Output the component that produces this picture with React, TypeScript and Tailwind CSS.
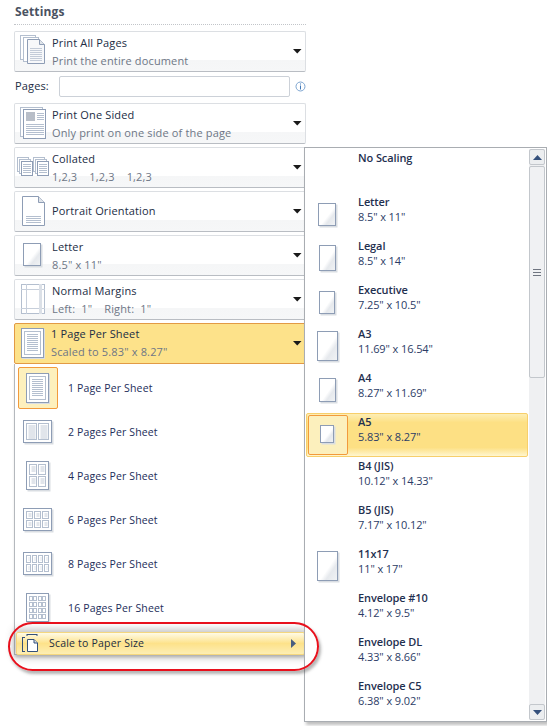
import React from "react";

const B = "#8e9db5";
const L = "#b4bfcf";

function Caret() {
  return (
    <svg width="9" height="5" viewBox="0 0 9 5" className="shrink-0">
      <path d="M0 0H8.5L4.25 4.5Z" fill="#1a1a1a" />
    </svg>
  );
}

function Lines({ x, y, w, n, gap = 2, color = L }: { x: number; y: number; w: number; n: number; gap?: number; color?: string }) {
  return (
    <>
      {Array.from({ length: n }).map((_, i) => (
        <rect key={i} x={x} y={y + i * gap} width={w} height={1} fill={color} />
      ))}
    </>
  );
}

function IconAllPages() {
  return (
    <svg width="36" height="39" viewBox="0 0 36 39" className="shrink-0">
      <rect x="5.5" y="3.5" width="15" height="24" fill="#fff" stroke={L} />
      <rect x="8.5" y="5.5" width="15" height="24" fill="#fff" stroke={L} />
      <path d="M12.5 7.5H24.5L29.5 12.5V31.5H12.5Z" fill="#f7f8fa" stroke={B} />
      <path d="M24.5 7.5V12.5H29.5" fill="#dfe4ea" stroke={B} />
      <Lines x={15} y={16} w={12} n={7} color="#c3cbd8" />
    </svg>
  );
}
function IconOneSided() {
  return (
    <svg width="36" height="39" viewBox="0 0 36 39" className="shrink-0">
      <rect x="5.5" y="3.5" width="22" height="29" fill="#fff" stroke={L} />
      <rect x="8.5" y="5.5" width="22" height="29" fill="#fff" stroke={B} />
      <rect x="11" y="8" width="9" height="9" fill="#b8bec8" />
      <Lines x={22} y={9} w={7} n={4} />
      <Lines x={11} y={20} w={18} n={6} />
    </svg>
  );
}
function Mini({ x }: { x: number }) {
  return (
    <>
      <rect x={x + 0.5} y="9.5" width="11" height="14" fill="#fff" stroke={L} />
      <rect x={x + 2.5} y="11.5" width="11" height="14" fill="#fff" stroke={L} />
      <rect x={x + 4.5} y="13.5" width="11" height="14" fill="#fff" stroke={B} />
      <Lines x={x + 6} y={16} w={8} n={5} gap={2} />
    </>
  );
}
function IconCollated() {
  return (
    <svg width="36" height="39" viewBox="0 0 36 39" className="shrink-0 -ml-px">
      <Mini x={2} />
      <Mini x={18} />
    </svg>
  );
}
function IconPortrait() {
  return (
    <svg width="36" height="39" viewBox="0 0 36 39" className="shrink-0">
      <path d="M7.5 4.5H23.5L29.5 10.5V33.5H7.5Z" fill="#fff" stroke={B} />
      <path d="M23.5 4.5V10.5H29.5" fill="#dfe4ea" stroke={B} />
      <Lines x={11} y={24} w={15} n={4} />
    </svg>
  );
}
function IconPage({ id, w, h }: { id: string; w: number; h: number }) {
  return (
    <svg width={w + 2} height={h + 2} viewBox={`0 0 ${w + 2} ${h + 2}`} className="shrink-0">
      <defs>
        <linearGradient id={id} x1="0" y1="0" x2="1" y2="1">
          <stop offset="0.55" stopColor="#ffffff" />
          <stop offset="0.7" stopColor="#e6e9ed" />
          <stop offset="1" stopColor="#f1f3f5" />
        </linearGradient>
      </defs>
      <rect x="1.5" y="1.5" width={w} height={h} fill="#d9dde2" />
      <rect x="0.5" y="0.5" width={w - 1} height={h - 1} fill={`url(#${id})`} stroke={B} />
    </svg>
  );
}
function IconMargins() {
  return (
    <svg width="36" height="39" viewBox="0 0 36 39" className="shrink-0">
      <rect x="6.5" y="4.5" width="23" height="29" fill="#fff" stroke={L} />
      <rect x="6" y="9" width="24" height="1" fill="#c7cfdb" />
      <rect x="6" y="28" width="24" height="1" fill="#c7cfdb" />
      <rect x="11" y="4" width="1" height="30" fill="#c7cfdb" />
      <rect x="24" y="4" width="3" height="30" fill="#dbe0e7" />
    </svg>
  );
}
function IconOnePage({ size = 36 }: { size?: number }) {
  return (
    <svg width={size} height="39" viewBox="0 0 36 39" className="shrink-0">
      <rect x="7" y="5" width="23" height="30" fill="#d9dde2" />
      <rect x="6.5" y="4.5" width="22" height="29" fill="#fff" stroke={B} />
      <rect x="9.5" y="7.5" width="16" height="23" fill="#fff" stroke={L} />
      <Lines x={12} y={10} w={11} n={9} gap={2} />
    </svg>
  );
}
function IconGrid({ w, h, cols, rows, lines }: { w: number; h: number; cols: number; rows: number; lines: number }) {
  const pad = 2.5;
  const cw = (w - 1 - pad * 2 - (cols - 1)) / cols;
  const ch = (h - 1 - pad * 2 - (rows - 1)) / rows;
  const cells = [];
  for (let r = 0; r < rows; r++) {
    for (let c = 0; c < cols; c++) {
      const x = Math.round(pad + c * (cw + 1)) + 0.5;
      const y = Math.round(pad + r * (ch + 1)) + 0.5;
      const rw = Math.round(cw) - 1;
      const rh = Math.round(ch) - 1;
      const step = lines > 0 ? Math.max(2, Math.floor((rh - 2) / lines)) : 2;
      cells.push(
        <g key={`${r}-${c}`}>
          <rect x={x} y={y} width={rw} height={rh} fill="#fff" stroke={L} />
          {Array.from({ length: lines }).map((_, i) => (
            <rect key={i} x={x + 2} y={y + 2 + i * step} width={Math.max(rw - 3, 1)} height="1" fill="#c3cbd8" />
          ))}
        </g>
      );
    }
  }
  return (
    <svg width={w + 2} height={h + 2} viewBox={`0 0 ${w + 2} ${h + 2}`} className="shrink-0">
      <rect x="1.5" y="1.5" width={w} height={h} fill="#d9dde2" />
      <rect x="0.5" y="0.5" width={w - 1} height={h - 1} fill="#fff" stroke={B} />
      {cells}
    </svg>
  );
}
function IconScale() {
  return (
    <svg width="16" height="19" viewBox="0 0 16 19" className="shrink-0">
      <path d="M0.5 3V18M0 3.5H3M0 17.5H3" stroke="#33507a" fill="none" />
      <path d="M5 0.5H15M5 0V2M15 0V2" stroke="#33507a" fill="none" />
      <path d="M5.5 5.5H12L15.5 9V17.5H5.5Z" fill="#fff" stroke="#33507a" />
      <path d="M12 5.5V9H15.5" fill="#d8dde4" stroke="#33507a" />
    </svg>
  );
}

function Dropdown({
  icon,
  title,
  sub,
  active,
}: {
  icon: React.ReactNode;
  title: string;
  sub?: React.ReactNode;
  active?: boolean;
}) {
  const box = active
    ? "border-[#e29a45] bg-[#fde28a] rounded-[2px]"
    : "border-[#dcdfe3] border-b-[#b9bdc3] rounded-[2px] bg-[linear-gradient(#ffffff_0,#ffffff_72%,#f5f6f7_72%,#f6f7f8_100%)]";
  return (
    <div className={`flex h-[41px] items-center border pr-[3px] ${box}`}>
      <div className="flex w-[36px] shrink-0 justify-center">{icon}</div>
      <div
        className={`flex min-w-0 flex-1 flex-col ${active ? "-mt-[2px] gap-[3px]" : sub ? "ml-px gap-[3px]" : "-mt-[2px] ml-px"}`}
      >
        <div className="h-[15px] whitespace-nowrap leading-[15px] text-[#222d44]">{title}</div>
        {sub && <div className="h-[15px] whitespace-pre leading-[15px] text-[#6e7686]">{sub}</div>}
      </div>
      <Caret />
    </div>
  );
}

const menu: { label: string; icon: React.ReactNode }[] = [
  { label: "1 Page Per Sheet", icon: <IconOnePage /> },
  { label: "2 Pages Per Sheet", icon: <IconGrid w={29} h={23} cols={2} rows={1} lines={7} /> },
  { label: "4 Pages Per Sheet", icon: <IconGrid w={23} h={29} cols={2} rows={2} lines={3} /> },
  { label: "6 Pages Per Sheet", icon: <IconGrid w={29} h={23} cols={3} rows={2} lines={2} /> },
  { label: "8 Pages Per Sheet", icon: <IconGrid w={29} h={23} cols={4} rows={2} lines={2} /> },
  { label: "16 Pages Per Sheet", icon: <IconGrid w={23} h={29} cols={4} rows={4} lines={0} /> },
];

const sizes: { name: string; dim: string; icon?: [number, number]; active?: boolean }[] = [
  { name: "No Scaling", dim: "" },
  { name: "Letter", dim: '8.5" x 11"', icon: [18, 23] },
  { name: "Legal", dim: '8.5" x 14"', icon: [17, 26] },
  { name: "Executive", dim: '7.25" x 10.5"', icon: [16, 23] },
  { name: "A3", dim: '11.69" x 16.54"', icon: [21, 30] },
  { name: "A4", dim: '8.27" x 11.69"', icon: [17, 24] },
  { name: "A5", dim: '5.83" x 8.27"', icon: [14, 18], active: true },
  { name: "B4 (JIS)", dim: '10.12" x 14.33"' },
  { name: "B5 (JIS)", dim: '7.17" x 10.12"' },
  { name: "11x17", dim: '11" x 17"', icon: [21, 30] },
  { name: "Envelope #10", dim: '4.12" x 9.5"' },
  { name: "Envelope DL", dim: '4.33" x 8.66"' },
  { name: "Envelope C5", dim: '6.38" x 9.02"' },
];

function ScrollBtn({ up }: { up?: boolean }) {
  return (
    <div className="flex h-[16px] items-center justify-center rounded-[2px] border border-[#c3c7cc] bg-[#eceef0]">
      <svg width="9" height="5" viewBox="0 0 9 5">
        <path d={up ? "M0 5H9L4.5 0Z" : "M0 0H9L4.5 5Z"} fill="#34507c" />
      </svg>
    </div>
  );
}

export default function App() {
  return (
    <div className="relative h-[726px] w-[547px] overflow-hidden bg-white font-['Open_Sans',sans-serif] text-[11px] tracking-[0.15px]">
      <div className="w-[306px] pl-[14px]">
        <div className="h-[25px] border-b border-dotted border-[#c2c5c9] pt-[4px] pl-[1px] text-[12px] font-bold leading-[16px] text-[#4a5262]">
          Settings
        </div>
        <div className="mt-[6px] flex flex-col gap-[3px]">
          <Dropdown icon={<IconAllPages />} title="Print All Pages" sub="Print the entire document" />
          <div className="mb-[3px] mt-[1px] flex h-[21px] items-center">
            <div className="w-[45px] pl-[1px] text-[#222d44]">Pages:</div>
            <div className="h-[21px] w-[232px] rounded-[2px] border border-[#ccd1d8] bg-white" />
            <svg width="11" height="11" viewBox="0 0 11 11" className="ml-[5px]">
              <circle cx="5.5" cy="5.5" r="4.5" fill="#fff" stroke="#7ba4d0" />
              <rect x="5" y="2.5" width="1" height="1" fill="#3f78b8" />
              <rect x="5" y="4.5" width="1" height="4" fill="#3f78b8" />
            </svg>
          </div>
          <Dropdown icon={<IconOneSided />} title="Print One Sided" sub="Only print on one side of the page" />
          <Dropdown
            icon={<IconCollated />}
            title="Collated"
            sub={
              <span className="flex gap-[12px]">
                <span>1,2,3</span>
                <span>1,2,3</span>
                <span>1,2,3</span>
              </span>
            }
          />
          <Dropdown icon={<IconPortrait />} title="Portrait Orientation" />
          <Dropdown icon={<IconPage id="letterBtn" w={18} h={23} />} title="Letter" sub={'8.5" x 11"'} />
          <Dropdown icon={<IconMargins />} title="Normal Margins" sub={'Left:  1"    Right:  1"'} />
          <Dropdown active icon={<IconOnePage />} title="1 Page Per Sheet" sub={'Scaled to 5.83" x 8.27"'} />
        </div>

        <div className="h-[291px] border-x border-b border-[#b4b8bd] bg-white pt-[2px] shadow-[1px_2px_3px_rgba(0,0,0,0.2)]">
          {menu.map((m, i) => (
            <div key={m.label} className="ml-[3px] flex h-[44px] items-center">
              <div
                className={`flex h-[42px] w-[40px] shrink-0 items-center justify-center rounded-[2px] border ${
                  i === 0 ? "border-[#f29a3c] bg-[#fdf0bd]" : "border-transparent"
                }`}
              >
                {m.icon}
              </div>
              <div className="ml-[10px] mt-px text-[10.5px] tracking-[0.15px] text-[#222d5a]">{m.label}</div>
            </div>
          ))}
          <div className="relative z-10 mt-[2px] ml-px flex h-[23px] w-[289px] items-center rounded-[2px] border border-[#f5d77e] bg-[linear-gradient(#fffbe6,#fde28a_50%,#fdeeb4)] shadow-[0_0_7px_3px_rgba(90,90,90,0.35)]">
            <div className="ml-[5px] w-[27px]">
              <IconScale />
            </div>
            <div className="flex-1 text-[10.5px] tracking-[0.2px] text-[#222d44]">Scale to Paper Size</div>
            <svg width="5" height="9" viewBox="0 0 5 9" className="mr-[8px]">
              <path d="M0 0V9L5 4.5Z" fill="#475d80" />
            </svg>
          </div>
        </div>
      </div>

      {/* submenu flyout */}
      <div className="absolute left-[304px] top-[147px] z-20 flex h-[575px] w-[243px] border border-[#a9adb2] bg-white shadow-[2px_3px_3px_rgba(0,0,0,0.25)]">
        <div className="w-[224px] pt-px pl-[1px]">
          {sizes.map((s) => (
            <div
              key={s.name}
              className={`flex h-[44px] w-[222px] items-center rounded-[2px] border pl-[1px] ${
                s.active
                  ? "border-[#f7cf6b] bg-[linear-gradient(#fdeeb5,#fde084_20%,#fde084_80%,#fff6cf)]"
                  : "border-transparent"
              }`}
            >
              <div
                className={`flex h-[40px] w-[40px] shrink-0 items-center justify-center rounded-[2px] border ${
                  s.active ? "border-[#f29a3c] bg-[#fcf0bd]" : "border-transparent"
                }`}
              >
                {s.icon && <IconPage id={`p${s.name.replace(/\W/g, "")}`} w={s.icon[0]} h={s.icon[1]} />}
              </div>
              <div className="ml-[10px] h-[42px] leading-[15px]">
                <div className="font-semibold tracking-[-0.1px] text-[#1f3050]">{s.name}</div>
                <div className="tracking-[-0.1px] text-[#2c3c66]">{s.dim}</div>
              </div>
            </div>
          ))}
        </div>
        <div className="my-px flex w-[16px] flex-col bg-[#eff0f2]">
          <ScrollBtn up />
          <div className="mt-px flex h-[212px] items-center justify-center rounded-[2px] border border-[#c3c7cc] bg-[#f0f1f3]">
            <svg width="8" height="7" viewBox="0 0 8 7">
              <path d="M0 .5H8M0 3.5H8M0 6.5H8" stroke="#6f7580" />
            </svg>
          </div>
          <div className="flex-1" />
          <ScrollBtn />
        </div>
      </div>

      {/* red annotation */}
      <div className="absolute left-[8px] top-[622px] z-30 h-[49px] w-[311px] rounded-[25px] border-2 border-[#e8101c] shadow-[2px_3px_3px_rgba(70,70,70,0.4)]" />
    </div>
  );
}
